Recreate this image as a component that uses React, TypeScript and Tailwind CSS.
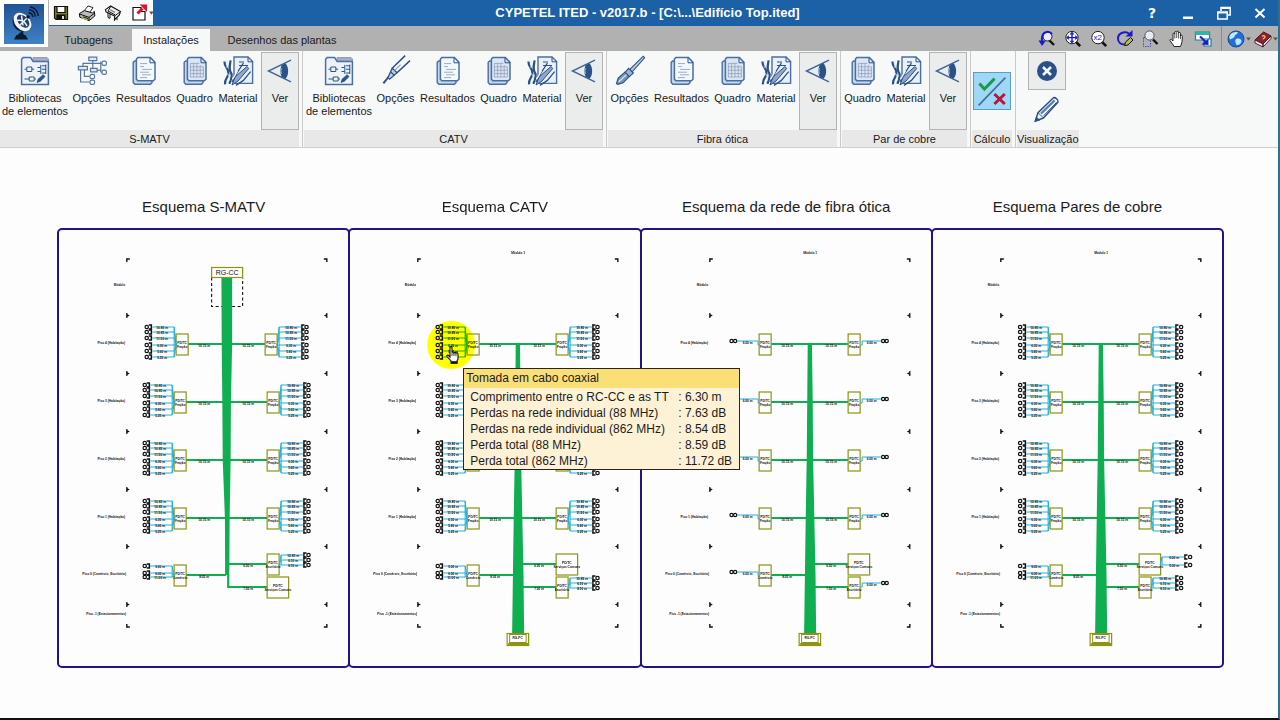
import type { ReactNode } from "react";

const NAVY = "#2b5288";
const GREEN = "#0fae50";
const CYAN = "#1fb0dc";
const OLIVE = "#8c9410";

/* ---------- Ribbon icons (32 x 32 grid) ---------- */

function Icon32({ children }: { children: ReactNode }) {
  return (
    <svg viewBox="0 0 32 32" className="size-8 shrink-0" fill="none" stroke={NAVY} strokeWidth="1.3" aria-hidden="true">
      {children}
    </svg>
  );
}

function LibraryIcon() {
  return (
    <Icon32>
      <path d="M14 2.6h14l1.4 1.4v4H14z" fill="#a9adc4" stroke="#8f96b4" strokeWidth="1" />
      <path d="M2.6 29.4V4.2L4.2 2.6h7.4l2.6 4h15.2v22.8z" fill="#eef3fa" stroke="none" />
      <path d="M29.4 6v23.4H2.6V4.2L4.2 2.6h7.4l2.6 4h15" stroke="#4a6fa3" strokeWidth="1.5" />
      <path d="M7.8 12h5v4.5h-5zM5.5 14.2h2M13 14.2h2.2M10.2 22h5v4h-5zM5.5 24h4.5M15.4 24h1.6" strokeWidth="1" />
      <path d="M21.8 10v9M23 10.8h4M23 14.2h4M23 18h4M18.5 12.5h3M18.5 16.5h3M26.8 9.5v9.5" strokeWidth="1" />
      <path d="m18 27.5 1.2-3.4 5-4.4 1.8 1.9-4.6 4.6z" fill={NAVY} strokeWidth=".8" />
    </Icon32>
  );
}

function TreeIcon() {
  return (
    <Icon32>
      <g stroke="#5577a2" strokeWidth="1.2">
        <path d="M12.8 2.2h8v3.4h-8zM2.4 11.4h9v3.4h-9zM14.5 13.4h6.6v3.4h-6.6z" fill="#dfe9f5" />
        <path d="M16.8 5.6v7.6M7 11.2V8.4h17.8M4.6 15v12h9M8.4 15v6.4h5M21 15.2h3.6M24.8 6.4v10.8" />
        <rect x="26" y="6.2" width="4.4" height="4.2" rx="1.6" fill="#fff" />
        <rect x="26" y="15.2" width="4.4" height="4.2" rx="1.6" fill="#fff" />
        <rect x="14" y="19.4" width="4.6" height="4.2" rx="1.6" fill="#fff" />
        <rect x="14" y="25.2" width="4.6" height="4.2" rx="1.6" fill="#fff" />
        <path d="M24.8 8.4H26M24.8 17.2H26" />
      </g>
    </Icon32>
  );
}

function CoaxIcon() {
  return (
    <Icon32>
      <path d="m3.4 28.4 5-6.4" strokeWidth="2" />
      <path d="m8 22.6 4.2-9.4 4.8 4.6-7.4 6.4z" fill="#c3d2e6" />
      <path d="m12.2 13.2 13-12.6M17 17.8 30 5.6" strokeWidth="1.5" />
      <path d="m14.6 15.6 6-6" stroke="#8aa5c8" />
      <path d="m10.8 17 3.6 3.4" />
    </Icon32>
  );
}

function FibreIcon() {
  return (
    <Icon32>
      <path d="M15.6 14.6 29.2 1.2l1.4 1.6-12.4 14z" fill="#b9c8dc" strokeWidth="1.1" />
      <path d="m11 17.4 3.6-4 4.8 4.6-4.2 3.8z" fill="#9db2cd" strokeWidth="1.1" />
      <path d="m2.4 28.6 1.8-5.6 6.6-5.8 4.4 4.4-6 6.2-5.4 1.6z" fill="#7b93b4" strokeWidth="1.1" />
      <path d="m4.8 26.8 7.6-7.2" stroke="#dbe5f1" />
    </Icon32>
  );
}

function PagesIcon({ grid }: { grid?: boolean }) {
  return (
    <Icon32>
      <path d="M8 6H6.6L5.2 7.4v20l1.6 1.8h15.6l1.6-1.6V26" fill="#c8d6ea" stroke="#4a6fa3" strokeWidth="1.4" />
      <path
        d="M9.8 2.6h12.6l4.6 4.8v16.8l-1.6 1.6H9.8l-1.4-1.6V4z"
        fill={grid ? "#dbe5f3" : "#f4f8fd"}
        stroke="#4a6fa3"
        strokeWidth="1.5"
      />
      <path d="M22 2.8v5h5" strokeWidth="1" />
      {grid ? (
        <path
          d="M11.4 8.4h9M11.4 11.8h13M11.4 15.2h13M11.4 18.6h13M11.4 22h13M11.4 8.4V22M14.6 8.4V22M17.9 8.4V22M21.2 10V22M24.4 11.8V22"
          stroke="#8798bd"
          strokeWidth=".7"
        />
      ) : (
        <path d="M12 8.6h7M12 11.6h4M14 14.4h10M12 17.2h9M14 19.8h9M12 22.6h7" stroke="#9aabc6" strokeWidth="1" />
      )}
    </Icon32>
  );
}

function MaterialIcon() {
  return (
    <Icon32>
      <path d="M12 2h14l4.6 4.6v21.8H12z" fill="#e9f0f9" stroke="#4a6fa3" strokeWidth="1.4" />
      <path d="M26 2.2v4.6h4.4M17 7h5M17 10.5h9" strokeWidth="1" />
      <path d="m10 30 3-8 11.8-10.4 2 1.8L16 26z" fill="#8fa8c9" strokeWidth="1" />
      <path d="m14 30.4 7.4-5 7.2-8.8M10 27l5-9 6.4-9.8" strokeWidth="1.3" />
      <path d="M2.4 6.4c0 6 4.4 6 4 12.4-.2 4-4.2 5-3.4 10.6" strokeWidth="2.2" />
      <path d="M8.6 5.4c-1 6-2 9 .6 12.8 2 3-1.2 6.6-1.6 10.6" strokeWidth="2.2" />
      <path d="M5 5v8M3.4 17.6c4 1.8 4.6 4.6 4 8" stroke="#dfe9f5" strokeWidth="1" />
      <path d="m10.8 24 4.6-8" stroke="#f6f9fd" strokeWidth="1.3" />
    </Icon32>
  );
}

function EyeIcon() {
  return (
    <Icon32>
      <path d="M27 5.2 4.4 16 27 26.8" stroke="#3f6798" strokeWidth="1.4" />
      <path d="M21.600 8.200c3.400 4.400 3.400 11.200 0 15.600L17.600 22c-1.600-3.600-1.600-8.400 0-12z" fill={NAVY} stroke="none" />
      <path d="M17.400 13c-.8 2-.8 4 0 6" stroke="#8fb0d6" strokeWidth="1.200" />
    </Icon32>
  );
}

function CheckCrossIcon() {
  return (
    <Icon32>
      <path d="M2.6 30.4 29.4 2.6" stroke="#44719f" strokeWidth="1.7" />
      <path d="m3.4 8.4 5 5.6L18.6 3.6" stroke="#1c9a4a" strokeWidth="3" />
      <path d="m18.4 19 10.4 10M28.8 19 18.4 29" stroke="#b5173c" strokeWidth="3" />
    </Icon32>
  );
}

function CircleCrossIcon() {
  return (
    <Icon32>
      <circle cx="16" cy="16" r="10" fill={NAVY} stroke="none" />
      <path d="m12 12 8 8M20 12l-8 8" stroke="#f4f7fb" strokeWidth="2.5" />
    </Icon32>
  );
}

function PencilIcon() {
  return (
    <Icon32>
      <path d="M4.400 28 7 19.600 22.400 4.800c1.800-.8 5.200 2 4.600 4.400L12.400 25z" fill="#f2f6fb" strokeWidth="1.500" />
      <path d="M10 20.600 23.600 7.400" stroke="#5c81b0" strokeWidth="2.200" />
      <path d="m12.600 22.800 13-13.400M7.200 19.800l5 5" strokeWidth="1" />
      <path d="m4.400 28 1-3.400 2.600 2.400z" fill={NAVY} />
    </Icon32>
  );
}

/* ---------- Small toolbar icons (20 x 20 grid) ---------- */

function Icon20({ children }: { children: ReactNode }) {
  return (
    <svg viewBox="0 0 20 20" className="size-5 shrink-0" fill="none" stroke="#111" strokeWidth="1.2" aria-hidden="true">
      {children}
    </svg>
  );
}

function Caret() {
  return (
    <svg viewBox="0 0 5 4" className="h-1 w-[5px] shrink-0" aria-hidden="true">
      <path d="M0 .5h5L2.5 3.5z" fill="#555" />
    </svg>
  );
}

const SaveIcon = () => (
  <Icon20>
    <path d="M3.5 3.5h13v13H5l-1.500-1.500z" fill="#80801a" />
    <path d="M6 3.500h8v6H6z" fill="#fff" />
    <path d="M6 12h8v4.500H6z" fill="#111" />
    <path d="M11 13h2v3h-2z" fill="#ddd" stroke="none" />
  </Icon20>
);

const PrinterIcon = () => (
  <Icon20>
    <path d="m7 8 4-5 5 1.600-3.400 5z" fill="#fff" strokeWidth=".9" />
    <path d="m2.400 10.600 5-3 8 2.400 2-1.600.4 4.600-5.600 4.600-9.400-3.400z" fill="#bcbcbc" strokeWidth="1" />
    <path d="m2.600 11 9.400 3.400 5.600-4.200M12 14.400v3M6 13.800l5 1.800" strokeWidth="1" />
    <path d="m4.600 14.800 6 2" stroke="#c9c63a" />
  </Icon20>
);

const PlotterIcon = () => (
  <Icon20>
    <path d="M2.400 6.600 7.600 3l9.800 5.600-1 3.400-4.800 4.600V13L3 8.800z" fill="#efefef" strokeWidth="1.100" />
    <path d="m11.600 13 5.600-4.200M7.800 3.400 5 8l7 3.800M5 10v4.400l2 1V11M14 14.800v2.400M11.400 16v1.800" strokeWidth="1" />
    <path d="M7.200 6.800 12 9.600" stroke="#777" />
  </Icon20>
);

const ExportIcon = () => (
  <Icon20>
    <path d="M4 4.500h8v4h4v8.500H4z" fill="#fff" />
    <path d="m8.500 10.500 5-5" stroke="#e0112b" strokeWidth="3" />
    <path d="M10.600 1.500H18V9z" fill="#e0112b" stroke="none" />
  </Icon20>
);

function Lens({ children }: { children?: ReactNode }) {
  return (
    <>
      <path d="m13.200 13.200 4 4" stroke="#111" strokeWidth="2.600" />
      <circle cx="9" cy="8.600" r="6.200" fill="#fff" stroke="#222" strokeWidth="1" />
      {children}
    </>
  );
}

const ZoomPreviousIcon = () => (
  <Icon20>
    <path d="m11.500 10.500 5.500 5.500" strokeWidth="2.400" />
    <circle cx="10.500" cy="7.500" r="4.500" fill="#eee" strokeWidth=".9" />
    <path d="M15 5C12 1.500 7 2.500 5.500 6.500c-.8 2-.8 4.500-.6 6.500" stroke="#1a1ad0" strokeWidth="2" />
    <path d="M1.500 11.500H9L5 17z" fill="#1a1ad0" stroke="none" />
  </Icon20>
);
const ZoomAllIcon = () => (
  <Icon20>
    <Lens>
      <path d="M9 4v9.200M4.400 8.600h9.200" stroke="#1a1ad0" strokeWidth="1.400" />
      <path d="m9 2.600 2.400 2.800H6.600zM9 14.600l2.400-2.800H6.600zM3 8.600l2.800 2.400V6.200zM15 8.600l-2.800 2.400V6.200z" fill="#1a1ad0" stroke="none" />
    </Lens>
  </Icon20>
);
const ZoomDoubleIcon = () => (
  <Icon20>
    <Lens>
      <text x="4.600" y="11.400" fontSize="8" fill="#1a1ad0" stroke="none" className="font-['Liberation_Sans',sans-serif]">
        x2
      </text>
    </Lens>
  </Icon20>
);
const RedrawIcon = () => (
  <Icon20>
    <path d="M14 4.500C9 1.500 3 4.500 3 9.500c0 4 3 6 6.500 6" stroke="#1a1ad0" strokeWidth="2" />
    <path d="M10.500 7.500h7v-6.500z" fill="#1a1ad0" stroke="none" />
    <path d="m9.500 16.500 1-3.500 5-4.500 2.500 2.500-5 5z" fill="#b9b54a" strokeWidth="1" />
  </Icon20>
);
const ZoomWindowIcon = () => (
  <Icon20>
    <path d="M2.500 8.500h7v9h-7z" stroke="#3b3bd8" strokeWidth=".9" strokeDasharray="1.500 1" />
    <path d="m12 10.500 4.500 4.500" strokeWidth="2.400" />
    <circle cx="8.500" cy="6.500" r="4.600" fill="#e8eaf4" stroke="#555" strokeWidth="1" />
  </Icon20>
);
const PanIcon = () => (
  <Icon20>
    <path
      d="M7 17.500c-1-2.500-3-4-4-6-.4-1 .8-1.600 1.600-.8L6 12V5c0-1.200 1.800-1.200 1.800 0V3.400c0-1.200 1.900-1.200 1.900 0V3c0-1.200 1.900-1.200 1.900 0v1.400c0-1.200 1.900-1.200 1.900 0V7c.2-1 1.800-1 1.800.2 0 4-.3 7-1.800 10.300z"
      fill="#fff"
      strokeWidth=".9"
    />
    <path d="M7.800 5v4.500M9.700 4v5M11.600 4.500v5M13.500 7v3" strokeWidth=".7" />
  </Icon20>
);
const WindowsIcon = () => (
  <Icon20>
    <path d="M2.500 3h14v8h-14z" fill="#fff" stroke="#138a84" />
    <path d="M2.500 3h14v3h-14z" fill="#2bb5ac" stroke="none" />
    <path d="M11 10h7v7h-7z" fill="#fff" stroke="#138a84" />
    <path d="m7 7.500 6 5.500" stroke="#1a1ad0" strokeWidth="2" />
    <path d="m15.500 9.500v6.500l-7-.5z" fill="#1a1ad0" stroke="none" />
  </Icon20>
);
const GlobeIcon = () => (
  <Icon20>
    <circle cx="10" cy="10" r="8" fill="#1f6fd6" stroke="#174a98" strokeWidth="1" />
    <path d="M4 6c2-3 6-3.500 8-2.500-1 2-3 2-3.500 4S6 9 4.500 10.500C3 9.500 3 7.500 4 6zM10 10c2.500-1 5.500 0 5.500 2s-2 4-4 4-1.500-2-2-3 0-2 .5-3z" fill="#bfe4fb" stroke="none" />
  </Icon20>
);
const BookIcon = () => (
  <Icon20>
    <path d="M2 11 10.500 3l7.500 4-8 8z" fill="#8f1f3d" stroke="#4d0e20" strokeWidth="1" />
    <path d="M2 11v3l8 4v-3zM10 15l8-8v2.500L10 18z" fill="#f0ecec" stroke="#4d0e20" strokeWidth=".9" />
    <path d="M9 7.500c1-1.500 3.600-.6 2.800 1-.4.800-1.600.8-1.800 1.900" stroke="#f5c73c" strokeWidth="1.300" />
  </Icon20>
);

const AppLogo = () => (
  <svg viewBox="0 0 40 40" className="size-10" fill="none" aria-hidden="true">
    <path d="M10 35.500h14l-2.500-4.500h-9z" fill="#0b1a30" />
    <path d="M13 31.500h7l-1.500-5z" fill="#0b1a30" />
    <path d="M9 13c-2 9 4 16.500 13.500 14 2.500-.8 4-2 5-3.500z" fill="#0b1a30" />
    <ellipse cx="18.500" cy="18" rx="10.500" ry="7.500" transform="rotate(48 18.500 18)" fill="#f2f4f7" />
    <ellipse cx="19.200" cy="17.200" rx="7.600" ry="4.800" transform="rotate(48 19.200 17.200)" fill="#1c3f70" />
    <path d="M13 16.500c4-1 8 1 10 5.500M16 21l8-8M17.500 11.500l1.500 10" stroke="#f2f4f7" strokeWidth="1.500" />
    <circle cx="24" cy="13" r="1.800" fill="#0b1a30" />
    <path d="M24.500 8.500c2.500.4 4 2 4.400 4.500M25 5.800c4 .4 6 3 6.400 6.800M26 3c5 .4 8 4.400 8.300 9" stroke="#0b1a30" strokeWidth="1.400" />
  </svg>
);

/* ---------- Header ---------- */

const viewTools: [string, () => ReactNode][] = [
  ["Vista prévia", ZoomPreviousIcon],
  ["Vista global", ZoomAllIcon],
  ["Ampliar x2", ZoomDoubleIcon],
  ["Redesenhar", RedrawIcon],
  ["Marcar zoom", ZoomWindowIcon],
  ["Mover", PanIcon],
  ["Janelas", WindowsIcon],
];

function WindowButton({ label, children }: { label: string; children: ReactNode }) {
  return (
    <button type="button" aria-label={label} className="flex h-full w-9 items-center justify-center text-white">
      {children}
    </button>
  );
}

function Header() {
  return (
    <header className="flex">
      <div className="flex w-[49px] shrink-0 bg-[#b1b1b1] pb-1">
        <button type="button" aria-label="Ficheiro" className="flex w-12 items-center justify-center bg-white">
          <span className="block bg-gradient-to-b from-[#205493] to-[#3f82c8]">
            <AppLogo />
          </span>
        </button>
      </div>
      <div className="min-w-0 flex-1">
        <div className="flex h-[26px] items-center bg-[#1c60a6]">
          <div className="flex h-full flex-1 items-start">
            <div className="flex h-[25px] w-[104px] items-center gap-[6px] bg-[#fafafa] pl-[2px]">
              <button type="button" aria-label="Guardar"><SaveIcon /></button>
              <button type="button" aria-label="Imprimir"><PrinterIcon /></button>
              <button type="button" aria-label="Plotter"><PlotterIcon /></button>
              <button type="button" aria-label="Exportar" className="flex items-center"><ExportIcon /><Caret /></button>
            </div>
          </div>
          <h1 className="pr-8 text-[13px] font-bold whitespace-nowrap text-white">
            CYPETEL ITED - v2017.b - [C:\...\Edifício Top.ited]
          </h1>
          <div className="flex h-full flex-1 justify-end">
            <WindowButton label="Ajuda">
              <span className="font-['DejaVu_Sans'] text-sm font-bold">?</span>
            </WindowButton>
            <WindowButton label="Minimizar">
              <svg viewBox="0 0 14 14" className="size-[14px]"><path d="M2 10.500h10v2.500H2z" fill="#fff" /></svg>
            </WindowButton>
            <WindowButton label="Restaurar">
              <svg viewBox="0 0 14 14" className="size-[14px]" fill="none" stroke="#fff" strokeWidth="1.500">
                <path d="M4 5V1.500h9.200V9H10" /><path d="M.8 6h9.400v7H.8z" /><path d="M1 6.800h9M4 2.300h9" />
              </svg>
            </WindowButton>
            <WindowButton label="Fechar">
              <svg viewBox="0 0 14 14" className="size-[14px]" stroke="#fff" strokeWidth="2"><path d="m2.500 3 9 8.500M11.500 3l-9 8.500" /></svg>
            </WindowButton>
          </div>
        </div>
        <div className="flex h-[25px] items-end bg-[#b1b1b1] text-[11px] text-[#1a1a1a]">
          <nav className="flex h-[22px] flex-1">
            <button type="button" className="w-[83px] pr-1">Tubagens</button>
            <button type="button" className="w-[78px] bg-[#f7f8f8]">Instalações</button>
            <button type="button" className="w-[144px]">Desenhos das plantas</button>
          </nav>
          <div className="flex h-full items-center">
            <div className="flex items-center gap-[6px] pr-2">
              {viewTools.map(([label, Glyph]) => (
                <button key={label} type="button" aria-label={label}><Glyph /></button>
              ))}
            </div>
            <div className="h-full w-px bg-[#8c8c8c]" />
            <div className="flex items-center gap-[2px] pl-1">
              <button type="button" aria-label="Internet" className="flex items-center"><GlobeIcon /><Caret /></button>
              <button type="button" aria-label="Manual" className="flex items-center"><BookIcon /><Caret /></button>
            </div>
          </div>
        </div>
      </div>
    </header>
  );
}

/* ---------- Ribbon ---------- */

type ToolProps = { label: string; icon: ReactNode; size: string; pressed?: boolean };

function Tool({ label, icon, size, pressed }: ToolProps) {
  return (
    <button
      type="button"
      aria-pressed={pressed}
      className={`flex h-[78px] flex-col items-center border pt-[2px] whitespace-pre-line ${size} ${
        pressed ? "border-[#b3b3b3] bg-[#ebecec]" : "border-transparent"
      }`}
    >
      {icon}
      <span className="mt-[5px] w-max text-center leading-[13px]">{label}</span>
    </button>
  );
}

const library = <Tool label={"Bibliotecas\nde elementos"} icon={<LibraryIcon />} size="w-[70px]" />;
const results = <Tool label="Resultados" icon={<PagesIcon />} size="w-[61px]" />;
const chart = <Tool label="Quadro" icon={<PagesIcon grid />} size="w-[41px]" />;
const material = <Tool label="Material" icon={<MaterialIcon />} size="w-[46px]" />;
const look = <Tool label="Ver" icon={<EyeIcon />} size="w-[38px]" pressed />;
const options = (icon: ReactNode) => <Tool label="Opções" icon={icon} size="w-[43px]" />;

function Group({ title, children }: { title: string; children: ReactNode }) {
  return (
    <section className="flex flex-col">
      <div className="flex h-[79px] pt-px">{children}</div>
      <h2 className="h-[17px] bg-[#e8e8e8] text-center leading-[18px] whitespace-nowrap">{title}</h2>
    </section>
  );
}

const Separator = () => <div className="w-[5px] shrink-0 pl-[3px]"><div className="h-full w-px bg-[#c9c9c9]" /></div>;

function Ribbon() {
  return (
    <div className="flex border-b border-[#cfcfcf] bg-[#f7f8f8] text-[11px] text-[#1a1a1a]">
      <Group title="S-MATV">{library}{options(<TreeIcon />)}{results}{chart}{material}{look}</Group>
      <Separator />
      <Group title="CATV">{library}{options(<CoaxIcon />)}{results}{chart}{material}{look}</Group>
      <Separator />
      <Group title="Fibra ótica">{options(<FibreIcon />)}{results}{chart}{material}{look}</Group>
      <Separator />
      <Group title="Par de cobre">{chart}{material}{look}</Group>
      <Separator />
      <Group title="Cálculo">
        <div className="flex w-10 items-center justify-center">
          <button type="button" aria-label="Calcular" className="flex size-[38px] items-center justify-center border border-[#5e9dc0] bg-[#9fd8f6]">
            <CheckCrossIcon />
          </button>
        </div>
      </Group>
      <Separator />
      <Group title="Visualização">
        <div className="flex w-[60px] flex-col items-center gap-[3px]">
          <button type="button" aria-label="Fechar vista" className="flex size-[38px] items-center justify-center border border-[#b3b3b3] bg-[#ebecec]">
            <CircleCrossIcon />
          </button>
          <button type="button" aria-label="Editar"><PencilIcon /></button>
        </div>
      </Group>
    </div>
  );
}

/* ---------- Schematic drawing ---------- */

type Kind = "smatv" | "catv" | "fibre" | "copper";

const ROWS = [114, 172, 230, 288];
const OUTLETS = [-17, -12, -6, 1, 7, 13];
const LENGTHS = ["10.80 m", "10.85 m", "11.50 m", "6.30 m", "5.60 m", "5.25 m"];
const TICKS = [85.5, 143.5, 201.5, 259.5, 316.5, 374.5];

function Note({ x, y, children, anchor = "middle" }: { x: number; y: number; children: ReactNode; anchor?: "middle" | "end" }) {
  return (
    <text x={x} y={y} textAnchor={anchor} fontSize="3.2" fontWeight="bold" fill="#111">
      {children}
    </text>
  );
}

/* side is -1 for outlets drawn left of the cabinet, 1 for right */
function Outlets({ bus, y, side, offsets, lengths, round }: { bus: number; y: number; side: 1 | -1; offsets: number[]; lengths: string[]; round?: boolean }) {
  const end = bus + side * 22;
  return (
    <g fill="none">
      <path d={`M${bus} ${y + offsets[0]}V${y + offsets[offsets.length - 1]}`} stroke={CYAN} />
      {offsets.map((o, i) => (
        <g key={o}>
          <path d={`M${end} ${y + o}H${bus}L${bus - side * 2} ${y + 1}`} stroke={CYAN} />
          <Note x={bus + side * 12} y={y + o + 2.2}>{lengths[i]}</Note>
          <circle cx={end + side * (round ? 6 : 5.4)} cy={y + o} r="1.700" stroke="#111" strokeWidth="1.200" />
          <path
            d={`M${end} ${y + o - 2}h${side * 3.400}M${end + side * 0.800} ${y + o - 2.600}v5.200M${end} ${y + o + 2}h${side * 3.400}`}
            stroke="#111"
            strokeWidth="1.400"
          />
        </g>
      ))}
    </g>
  );
}

function FibreOutlet({ y, side }: { y: number; side: 1 | -1 }) {
  const box = side < 0 ? 118 : 218;
  const bus = box + side * 2;
  const end = side < 0 ? 95 : 239;
  return (
    <g fill="none">
      <path d={`M${end} ${y - 3}H${bus}V${y + 1}H${box}`} stroke={CYAN} />
      <Note x={(bus + end) / 2} y={y + 0.4}>6.00 m</Note>
      <circle cx={end + side * 2} cy={y - 3} r="1.600" stroke="#111" strokeWidth="1.200" />
      <circle cx={end + side * 5.6} cy={y - 3} r="1.600" stroke="#111" strokeWidth="1.200" />
    </g>
  );
}

function Cabinet({ x, y, wide, name }: { x: number; y: number; wide?: boolean; name: string }) {
  const w = wide ? 21.5 : 12;
  return (
    <g>
      <rect x={x} y={y - 10} width={w} height="21" fill="none" stroke={OLIVE} strokeWidth="1.200" />
      <Note x={x + w / 2} y={y - 0.2}>PD/TC</Note>
      <Note x={x + w / 2} y={y + 4}>{name}</Note>
    </g>
  );
}

function Branch({ from, to, y, length }: { from: number; to: number; y: number; length: string }) {
  return (
    <g>
      <path d={`M${from} ${y}H${to}`} stroke={GREEN} strokeWidth="2" />
      <Note x={from < 167 ? 145 : 189} y={y + 3}>{length}</Note>
    </g>
  );
}

function Frame() {
  const left = 67.7;
  const right = 267.7;
  return (
    <g stroke="#111" strokeWidth="1.200" fill="none">
      <path d={`M${left} 32V29h3M${right} 32V29h-3M${left} 394v3h3M${right} 394v3h-3`} strokeWidth="1.400" />
      {TICKS.map((t) => (
        <g key={t}>
          <path d={`M${left} ${t - 2.5}v5M${right} ${t - 2.5}v5`} />
          <path d={`M${left} ${t - 1.6}l3 1.600l-3 1.600zM${right} ${t - 1.6}l-3 1.600l3 1.600z`} fill="#111" stroke="none" />
        </g>
      ))}
    </g>
  );
}

function Schematic({ kind, title }: { kind: Kind; title: string }) {
  const smatv = kind === "smatv";
  const fibre = kind === "fibre";
  const copper = kind === "copper";
  const shift = (row: number) => (smatv && row > 0 ? 2 : 0);

  return (
    <svg viewBox="0 0 289 436" className="block h-[436px] w-full font-['Liberation_Sans',sans-serif]" role="img" aria-label={title}>
      <Frame />
      {!smatv && <Note x={168} y={24.2}>Módulo 1</Note>}
      <Note x={66} y={56.4} anchor="end">Módulo</Note>
      {ROWS.map((y, i) => (
        <Note key={y} x={66} y={y} anchor="end">{`Piso ${4 - i} (Habitação)`}</Note>
      ))}
      <Note x={67} y={345} anchor="end">Piso 0 (Comércio_Escritório)</Note>
      <Note x={67} y={385} anchor="end">Piso -1 (Estacionamentos)</Note>

      {ROWS.map((y, i) => (
        <g key={y}>
          <Branch from={129 - shift(i)} to={167} y={y} length="10.15 m" />
          <Branch from={167} to={206 + shift(i)} y={y} length="10.15 m" />
          <Cabinet x={117 - shift(i)} y={y} name="Fração" />
          <Cabinet x={206 + shift(i)} y={y} name="Fração" />
          {fibre ? (
            <>
              <FibreOutlet y={y} side={-1} />
              <FibreOutlet y={y} side={1} />
            </>
          ) : (
            <>
              <Outlets bus={115 - shift(i)} y={y} side={-1} offsets={OUTLETS} lengths={LENGTHS} round={copper} />
              <Outlets bus={220 + shift(i)} y={y} side={1} offsets={OUTLETS} lengths={LENGTHS} round={copper} />
            </>
          )}
        </g>
      ))}

      <Branch from={129 - shift(1)} to={167} y={345} length="8.05 m" />
      <Cabinet x={117 - shift(1)} y={345} name="Comércio" />
      {fibre ? (
        <FibreOutlet y={345} side={-1} />
      ) : (
        <Outlets bus={115 - shift(1)} y={345} side={-1} offsets={[-9, -2, 2]} lengths={["9.00 m", "6.00 m", "11.00 m"]} round={copper} />
      )}
      <Branch from={169} to={206 + shift(1)} y={334} length="6.50 m" />
      <Branch from={169} to={206 + shift(1)} y={357} length="7.50 m" />
      <Cabinet x={206 + shift(1)} y={334} wide={!smatv} name={smatv ? "Escritório" : "Serviços Comuns"} />
      <Cabinet x={206 + shift(1)} y={357} wide={smatv} name={smatv ? "Serviços Comuns" : "Escritório"} />
      {fibre ? (
        <FibreOutlet y={356} side={1} />
      ) : (
        <Outlets bus={smatv ? 222 : 220} y={smatv ? 334 : 357} side={1} offsets={[-9, -4, 1]} lengths={["10.85 m", "6.10 m", "8.10 m"]} round={copper} />
      )}
      {copper && <Outlets bus={229} y={334} side={1} offsets={[-7, 1]} lengths={["6.00 m", "5.00 m"]} round />}

      {smatv ? (
        <g>
          <path d="M152.500 47.500V76.500H183.500V47.500" fill="none" stroke="#111" strokeWidth="1.100" strokeDasharray="3 2.500" />
          <path d="M162.300 47.500H173V114L171.800 172 171.500 230 170.500 288 170.200 345V358H168V345H166L165.800 288 163.600 230 163.200 172 162.600 114z" fill={GREEN} />
          <rect x="152.500" y="37.500" width="31" height="10" fill="#fff" stroke={OLIVE} strokeWidth="1.200" />
          <text x="168" y="45" textAnchor="middle" fontSize="7" fill="#111">RG-CC</text>
        </g>
      ) : (
        <g>
          <path d="M165.600 113H169.800L170.600 172 171 230 172.200 288 173.400 345 174 403H162L162.800 345 163.600 288 164.600 230z" fill={GREEN} />
          <rect x="157" y="403.500" width="21.500" height="12" fill="#fff" stroke={OLIVE} strokeWidth="1.200" />
          <path d="M158 414H178" stroke={OLIVE} strokeWidth="2" />
          <rect x="159.500" y="404.500" width="16.500" height="8" fill="#fff" stroke={OLIVE} />
          <Note x={167.5} y={409.4}>RG-PC</Note>
        </g>
      )}
      {kind === "catv" && <circle cx="101" cy="115" r="24" fill="#ffff00" className="mix-blend-multiply" />}
    </svg>
  );
}

const readings = [
  ["Comprimento entre o RC-CC e as TT", "6.30 m"],
  ["Perdas na rede individual (88 MHz)", "7.63 dB"],
  ["Perdas na rede individual (862 MHz)", "8.54 dB"],
  ["Perda total (88 MHz)", "8.59 dB"],
  ["Perda total (862 MHz)", "11.72 dB"],
];

function Tooltip() {
  return (
    <div role="tooltip" className="absolute top-[138px] left-[113px] w-[277px] border border-[#2b2418] bg-[#fdf2d6] text-xs text-[#1c1c1c]">
      <table className="w-full border-collapse">
        <caption className="mb-px bg-[#f9df76] pl-[2px] text-left leading-[19px]">Tomada em cabo coaxial</caption>
        <tbody>
          {readings.map(([name, value]) => (
            <tr key={name} className="h-4 leading-4 whitespace-nowrap">
              <th scope="row" className="w-[214px] pl-[6px] text-left font-normal">{name}</th>
              <td>: {value}</td>
            </tr>
          ))}
        </tbody>
      </table>
    </div>
  );
}

function HandCursor() {
  return (
    <svg viewBox="0 0 14 18" className="absolute top-[116px] left-[96px] h-[18px] w-[14px]" aria-hidden="true">
      <path
        d="M4 1.500c0-1.200 2-1.200 2 0V6.500c.4-.8 2-.7 2 .3.400-.7 2-.6 2 .4.500-.6 2-.4 2 .7V13l-1 2v2.200H5V15L1 10.500c-.6-1.200.8-1.800 1.600-1L4 11z"
        fill="#fff"
        stroke="#111"
        strokeWidth="1.100"
      />
      <path d="M6 6.500v3.500M8 7v3M10 7.500v2.700" stroke="#111" strokeWidth=".8" />
      <path d="M5 15.200h6.500v2.300H5z" fill="#111" />
    </svg>
  );
}

const panels: { kind: Kind; title: string }[] = [
  { kind: "smatv", title: "Esquema S-MATV" },
  { kind: "catv", title: "Esquema CATV" },
  { kind: "fibre", title: "Esquema da rede de fibra ótica" },
  { kind: "copper", title: "Esquema Pares de cobre" },
];

export default function App() {
  return (
    <div className="flex min-h-screen flex-col border-r-2 border-b-2 border-r-[#2b7191] border-b-[#101010] bg-[#fdfdfd] font-['Liberation_Sans',Arial,sans-serif]">
      <Header />
      <Ribbon />
      <main className="grid grid-cols-4 pt-[47px] pr-[55px] pb-[50px] pl-[58px]">
        {panels.map(({ kind, title }) => (
          <figure key={kind} className={kind === "catv" ? "relative z-10" : undefined}>
            <figcaption className="pb-[9px] text-center text-[15px] leading-6 text-[#1c1c1c]">{title}</figcaption>
            <div className="relative -mx-px rounded-[5px] border-2 border-[#20148a]">
              <Schematic kind={kind} title={title} />
              {kind === "catv" && (
                <>
                  <Tooltip />
                  <HandCursor />
                </>
              )}
            </div>
          </figure>
        ))}
      </main>
    </div>
  );
}
